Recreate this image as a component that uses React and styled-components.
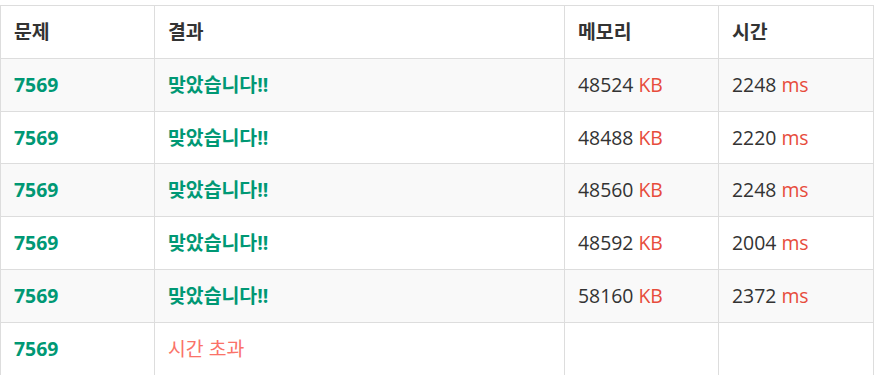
import React from "react";
import styled, { createGlobalStyle } from "styled-components";

const GlobalStyle = createGlobalStyle`
  body {
    margin: 0;
    background: #fff;
    font-family: "Open Sans", "Noto Sans CJK KR", sans-serif;
    color: #333;
  }
`;

const Table = styled.table`
  margin-top: 5px;
  width: 873px;
  border-collapse: collapse;
  table-layout: fixed;
  font-size: 19.4px;
  line-height: 25.8px;
`;

const HeadCell = styled.th`
  text-align: left;
  font-weight: 700;
  padding: 13px;
  border: 1px solid #ddd;
`;

const Row = styled.tr`
  background: ${(p) => (p.$striped ? "#f9f9f9" : "#fff")};
`;

const Cell = styled.td`
  padding: 13px;
  border: 1px solid #ddd;
  vertical-align: middle;
`;

const ProblemLink = styled.span`
  color: #009874;
  font-weight: 700;
`;

const Result = styled.span`
  color: ${(p) => (p.$ok ? "#009874" : "#fa7268")};
  font-weight: ${(p) => (p.$ok ? 700 : 400)};
`;

const Unit = styled.span`
  color: #e74c3c;
`;

const rows = [
  { id: 7569, ok: true, mem: 48524, time: 2248 },
  { id: 7569, ok: true, mem: 48488, time: 2220 },
  { id: 7569, ok: true, mem: 48560, time: 2248 },
  { id: 7569, ok: true, mem: 48592, time: 2004 },
  { id: 7569, ok: true, mem: 58160, time: 2372 },
  { id: 7569, ok: false },
];

export default function App() {
  return (
    <>
      <GlobalStyle />
      <Table>
        <colgroup>
          <col style={{ width: 154 }} />
          <col style={{ width: 410 }} />
          <col style={{ width: 154 }} />
          <col style={{ width: 155 }} />
        </colgroup>
        <thead>
          <tr>
            <HeadCell>문제</HeadCell>
            <HeadCell>결과</HeadCell>
            <HeadCell>메모리</HeadCell>
            <HeadCell>시간</HeadCell>
          </tr>
        </thead>
        <tbody>
          {rows.map((r, i) => (
            <Row key={i} $striped={i % 2 === 0}>
              <Cell>
                <ProblemLink>{r.id}</ProblemLink>
              </Cell>
              <Cell>
                <Result $ok={r.ok}>{r.ok ? "맞았습니다!!" : "시간 초과"}</Result>
              </Cell>
              <Cell>
                {r.mem && (
                  <>
                    {r.mem} <Unit>KB</Unit>
                  </>
                )}
              </Cell>
              <Cell>
                {r.time && (
                  <>
                    {r.time} <Unit>ms</Unit>
                  </>
                )}
              </Cell>
            </Row>
          ))}
        </tbody>
      </Table>
    </>
  );
}
